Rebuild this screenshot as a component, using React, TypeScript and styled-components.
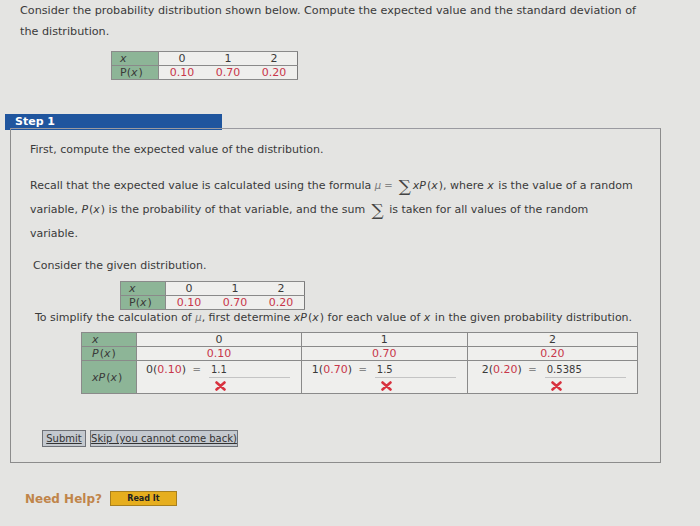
import React from "react";
import styled, { createGlobalStyle } from "styled-components";

const Global = createGlobalStyle`
  html, body { margin: 0; padding: 0; background: #e4e4e2; }
  body { font-family: "DejaVu Sans", Verdana, sans-serif; font-size: 11px; color: #3a3a3a; }
`;

const Page = styled.div`
  width: 700px;
  height: 526px;
  overflow: hidden;
  display: flex;
  flex-direction: column;
`;

const Intro = styled.p`
  margin: 0;
  padding: 0 0 0 20px;
  line-height: 21px;
  width: 618px;
  font-size: 11.2px;
`;

const DistTable = styled.table<{ $ml: number; $mt: number; $w: number }>`
  border-collapse: collapse;
  margin-left: ${(p) => p.$ml}px;
  margin-top: ${(p) => p.$mt}px;
  width: ${(p) => p.$w}px;
  border: 1px solid #7a7a7a;
  line-height: 13px;
  td { border: 1px solid #8a8a8a; padding: 0; }
`;

const HeadCell = styled.td<{ $w: number; $pl?: number }>`
  background: #8db597;
  width: ${(p) => p.$w}px;
  padding-left: ${(p) => p.$pl ?? 8}px !important;
  text-align: left;
  color: #3a3a3a;
`;

const ValCell = styled.td<{ $red?: boolean }>`
  background: #efefed;
  text-align: center;
  border-left: none !important;
  border-right: none !important;
  color: ${(p) => (p.$red ? "#c8364a" : "#3a3a3a")};
`;

const I = styled.i`
  font-style: italic;
  padding-right: 1px;
`;

const Red = styled.span`
  color: #c8364a;
`;

const StepSection = styled.section`
  margin-top: 34px;
  display: flex;
  flex-direction: column;
`;

const StepBar = styled.div`
  margin-left: 5px;
  width: 217px;
  height: 16px;
  background: #1f559e;
  color: #fff;
  font-weight: bold;
  font-size: 11px;
  line-height: 16px;
  padding-left: 10px;
  box-sizing: border-box;
`;

const StepBox = styled.div`
  margin-left: 10px;
  margin-top: -2px;
  width: 651px;
  height: 335px;
  box-sizing: border-box;
  border: 1px solid #8c8c8c;
  border-top-color: #9a9aa0;
  padding: 11px 0 0 19px;
  display: flex;
  flex-direction: column;
`;

const Para = styled.p<{ $mt?: number; $lh?: number; $ml?: number; $w?: number }>`
  margin: ${(p) => p.$mt ?? 0}px 0 0 ${(p) => p.$ml ?? 0}px;
  line-height: ${(p) => p.$lh ?? 20}px;
  max-width: ${(p) => (p.$w ? `${p.$w}px` : "none")};
`;

const Mu = styled.span`
  font-style: italic;
  color: #777;
  font-size: 10px;
`;

const Eq = styled.span`
  color: #888;
  font-size: 10px;
  margin: 0 3px;
`;

const Sigma = styled.span`
  font-family: "DejaVu Serif", serif;
  font-size: 17px;
  line-height: 10px;
  vertical-align: -3px;
  color: #444;
  margin: 0 2px 0 3px;
`;

const CalcTable = styled.table`
  border-collapse: collapse;
  margin-left: 51px;
  margin-top: 6px;
  width: 557px;
  border: 1px solid #7a7a7a;
  line-height: 13px;
  td { border: 1px solid #8a8a8a; padding: 0; }
`;

const CalcVal = styled.td<{ $red?: boolean }>`
  background: #efefed;
  text-align: center;
  color: ${(p) => (p.$red ? "#c8364a" : "#3a3a3a")};
  height: 13px;
`;

const WorkCell = styled.td`
  background: #efefed;
  height: 32px;
  vertical-align: top;
`;

const Work = styled.div<{ $pl: number }>`
  display: flex;
  align-items: flex-start;
  padding: 2px 0 0 ${(p) => p.$pl}px;
`;

const WorkLabel = styled.span`
  line-height: 14px;
  margin-right: 5px;
`;

const AnswerCol = styled.div`
  display: flex;
  flex-direction: column;
  width: 81px;
`;

const AnswerInput = styled.div`
  height: 14px;
  line-height: 14px;
  padding-left: 2px;
  font-size: 10px;
  border-bottom: 1px solid #c4c4c4;
`;

const Cross = styled.svg`
  margin: 3px 0 0 6px;
  display: block;
`;

const Buttons = styled.div`
  display: flex;
  gap: 4px;
  margin: 36px 0 0 12px;
`;

const Btn = styled.button<{ $w: number }>`
  width: ${(p) => p.$w}px;
  height: 17px;
  padding: 0;
  background: #c4c9cf;
  border: 1px solid #6f7278;
  font-family: "DejaVu Sans", Verdana, sans-serif;
  font-size: 10px;
  color: #333;
  text-decoration: underline;
  cursor: pointer;
`;

const HelpRow = styled.div`
  display: flex;
  align-items: center;
  gap: 8px;
  margin: 28px 0 0 25px;
`;

const HelpText = styled.span`
  font-weight: bold;
  font-size: 12px;
  color: #c0844a;
`;

const ReadBtn = styled.button`
  width: 67px;
  height: 15px;
  padding: 0;
  background: #e6ae1e;
  border: 1px solid #a8801e;
  font-family: "DejaVu Sans", Verdana, sans-serif;
  font-weight: bold;
  font-size: 8px;
  color: #222;
`;

const X = () => (
  <Cross width="11" height="10" viewBox="0 0 11 10">
    <path d="M1.5 1.5 L9.5 8.5 M9.5 1.5 L1.5 8.5" stroke="#d8323f" strokeWidth="2.6" strokeLinecap="round" />
  </Cross>
);

const Dist = ({ ml, mt, w, hw }: { ml: number; mt: number; w: number; hw: number }) => (
  <DistTable $ml={ml} $mt={mt} $w={w}>
    <tbody>
      <tr>
        <HeadCell $w={hw}><I>x</I></HeadCell>
        <ValCell>0</ValCell>
        <ValCell>1</ValCell>
        <ValCell>2</ValCell>
      </tr>
      <tr>
        <HeadCell $w={hw}>P(<I>x</I>)</HeadCell>
        <ValCell $red>0.10</ValCell>
        <ValCell $red>0.70</ValCell>
        <ValCell $red>0.20</ValCell>
      </tr>
    </tbody>
  </DistTable>
);

const rows = [
  { x: "0", p: "0.10", a: "1.1", pl: 9 },
  { x: "1", p: "0.70", a: "1.5", pl: 10 },
  { x: "2", p: "0.20", a: "0.5385", pl: 14 },
];

export default function App() {
  return (
    <Page>
      <Global />
      <Intro>
        Consider the probability distribution shown below. Compute the expected value and the standard deviation of
        the distribution.
      </Intro>
      <Dist ml={111} mt={9} w={187} hw={38} />
      <StepSection>
        <StepBar>Step 1</StepBar>
        <StepBox>
          <Para>First, compute the expected value of the distribution.</Para>
          <Para $mt={14} $lh={24} $w={605}>
            Recall that the expected value is calculated using the formula <Mu>μ</Mu>
            <Eq>=</Eq>
            <Sigma>∑</Sigma>
            <I>xP</I>(<I>x</I>), where <I>x</I> is the value of a random variable, <I>P</I>(<I>x</I>) is the
            probability of that variable, and the sum <Sigma>∑</Sigma> is taken for all values of the random
            variable.
          </Para>
          <Para $mt={10} $ml={3}>Consider the given distribution.</Para>
          <Dist ml={90} mt={5} w={185} hw={36} />
          <Para $ml={5} $lh={16}>
            To simplify the calculation of <Mu>μ</Mu>, first determine <I>xP</I>(<I>x</I>) for each value of{" "}
            <I>x</I> in the given probability distribution.
          </Para>
          <CalcTable>
            <tbody>
              <tr>
                <HeadCell $w={44} $pl={10}><I>x</I></HeadCell>
                {rows.map((r) => (
                  <CalcVal key={r.x}>{r.x}</CalcVal>
                ))}
              </tr>
              <tr>
                <HeadCell $w={44} $pl={10}><I>P</I>(<I>x</I>)</HeadCell>
                {rows.map((r) => (
                  <CalcVal key={r.x} $red>{r.p}</CalcVal>
                ))}
              </tr>
              <tr>
                <HeadCell $w={44} $pl={10}><I>xP</I>(<I>x</I>)</HeadCell>
                {rows.map((r) => (
                  <WorkCell key={r.x}>
                    <Work $pl={r.pl}>
                      <WorkLabel>
                        {r.x}(<Red>{r.p}</Red>) <Eq>=</Eq>
                      </WorkLabel>
                      <AnswerCol>
                        <AnswerInput>{r.a}</AnswerInput>
                        <X />
                      </AnswerCol>
                    </Work>
                  </WorkCell>
                ))}
              </tr>
            </tbody>
          </CalcTable>
          <Buttons>
            <Btn $w={44}>Submit</Btn>
            <Btn $w={148}>Skip (you cannot come back)</Btn>
          </Buttons>
        </StepBox>
      </StepSection>
      <HelpRow>
        <HelpText>Need Help?</HelpText>
        <ReadBtn>Read It</ReadBtn>
      </HelpRow>
    </Page>
  );
}
